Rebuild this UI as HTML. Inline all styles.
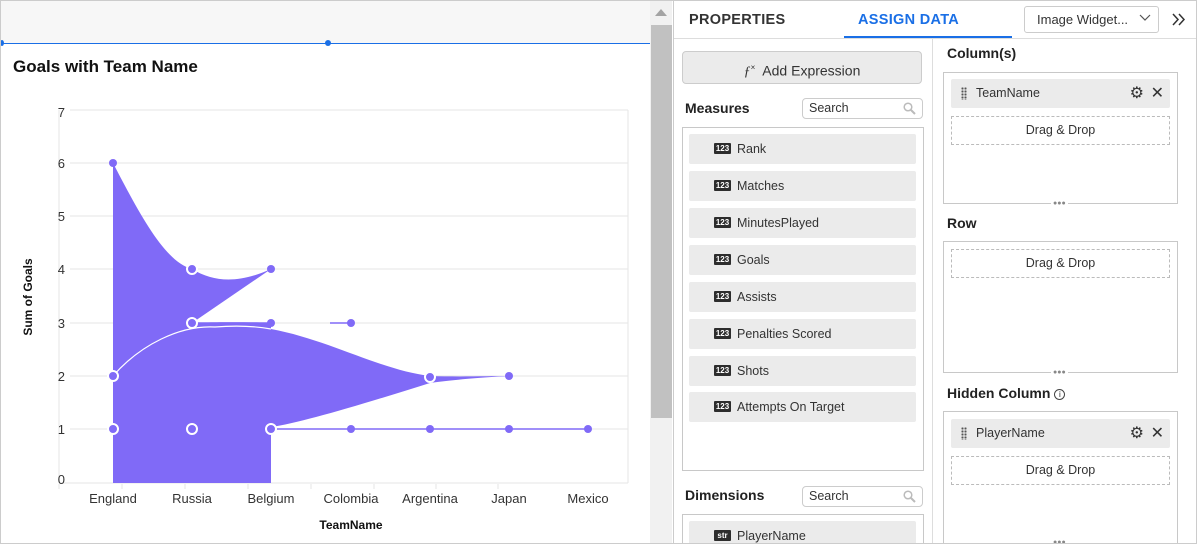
<!DOCTYPE html>
<html style="overflow:hidden"><head><meta charset="utf-8"><style>
*{box-sizing:border-box;margin:0;padding:0}
html,body{width:1197px;height:544px;overflow:hidden}
body{background:#fff;font-family:"Liberation Sans",Arial,sans-serif;color:#333;position:relative}
#w{position:absolute;left:0;top:0;width:1197px;height:544px;overflow:hidden}
.a{position:absolute}
.item{position:absolute;left:689px;width:227px;height:30px;background:#ebebeb;border-radius:2px;font-size:12.5px;color:#333;line-height:30px;padding-left:25px}
.ic{display:inline-block;width:17px;height:11px;background:#2d2d2d;color:#fff;font-size:8px;font-weight:bold;line-height:11px;text-align:center;margin-right:6px;vertical-align:middle;position:relative;top:-1px;border-radius:1px}
.lbl{position:absolute;font-weight:bold;font-size:14px;color:#222}
.search{position:absolute;left:802px;width:121px;height:21px;border:1px solid #ccc;border-radius:4px;font-size:12.5px;padding-left:6px;line-height:19px;color:#333}
.box{position:absolute;left:943px;width:235px;border:1px solid #c8c8c8}
.dd{position:absolute;left:951px;width:219px;height:29px;border:1px dashed #bbb;font-size:12.5px;text-align:center;line-height:27px;color:#333}
.fld{position:absolute;left:951px;width:219px;height:29px;background:#ebebeb;border-radius:2px;font-size:12.5px;line-height:29px;padding-left:25px}
.grip{position:absolute;left:10px;top:8px;width:6px;height:13px;background-image:radial-gradient(circle,#555 1px,transparent 1.2px);background-size:3px 3px}
.dots{position:absolute;font-size:7px;color:#888;letter-spacing:0px;background:#fff;padding:0 2px;line-height:6px}
</style></head><body><div id="w">
<div class="a" style="left:1px;top:1px;width:649px;height:42px;background:#f7f7f7"></div>
<div class="a" style="left:1px;top:43px;width:649px;height:1px;background:#1a6fe6"></div>
<div class="a" style="left:325px;top:40px;width:6px;height:6px;border-radius:50%;background:#1a6fe6"></div>
<div class="a" style="left:0;top:40px;width:4px;height:6px;border-radius:50%;background:#1a6fe6"></div>
<div class="a" style="left:13px;top:57px;font-size:17px;font-weight:bold;color:#111">Goals with Team Name</div>
<svg class="a" style="left:0;top:0" width="650" height="544">
<g stroke="#e6e6e6" stroke-width="1">
<line x1="70" y1="110" x2="628" y2="110"/><line x1="70" y1="163" x2="628" y2="163"/><line x1="70" y1="216" x2="628" y2="216"/><line x1="70" y1="269" x2="628" y2="269"/><line x1="70" y1="323" x2="628" y2="323"/><line x1="70" y1="376" x2="628" y2="376"/><line x1="70" y1="429" x2="628" y2="429"/><line x1="59" y1="483" x2="628" y2="483"/>
<line x1="59" y1="110" x2="59" y2="483"/><line x1="628" y1="110" x2="628" y2="483"/>
<line x1="59" y1="484" x2="59" y2="489"/><line x1="122" y1="484" x2="122" y2="489"/><line x1="185" y1="484" x2="185" y2="489"/><line x1="248" y1="484" x2="248" y2="489"/><line x1="311" y1="484" x2="311" y2="489"/><line x1="374" y1="484" x2="374" y2="489"/><line x1="436" y1="484" x2="436" y2="489"/><line x1="498" y1="484" x2="498" y2="489"/>
</g>
<g font-size="13" fill="#333" text-anchor="end">
<text x="65" y="117">7</text><text x="65" y="168">6</text><text x="65" y="221">5</text><text x="65" y="274">4</text><text x="65" y="328">3</text><text x="65" y="381">2</text><text x="65" y="434">1</text><text x="65" y="484">0</text></g>
<g font-size="13" fill="#333" text-anchor="middle">
<text x="113" y="503">England</text><text x="192" y="503">Russia</text><text x="271" y="503">Belgium</text><text x="351" y="503">Colombia</text><text x="430" y="503">Argentina</text><text x="509" y="503">Japan</text><text x="588" y="503">Mexico</text></g>
<text x="351" y="529" font-size="12" font-weight="bold" text-anchor="middle" fill="#111">TeamName</text>
<text transform="translate(32,297) rotate(-90)" font-size="12" font-weight="bold" text-anchor="middle" fill="#111">Sum of Goals</text>
<path fill="#806af7" d="M113,163 C140,215 165,262 192,269 C215,283 240,283 271,269 L192,323 C205,322 260,322 271,323 L271,329 C330,340 380,370 430,376 C460,377 490,376 509,376 C470,378 445,381 430,383 C360,405 300,423 271,427 L271,483 L113,483 Z"/>
<path fill="none" stroke="#806af7" stroke-width="1.5" d="M271,429 L588,429 M192,323 L271,323 M330,323 L351,323"/>
<path fill="none" stroke="#fff" stroke-width="1.2" d="M113,376 C140,345 180,325 215,327 C240,325 260,327 271,329"/>
<g fill="#806af7">
<circle cx="113" cy="163" r="4"/><circle cx="271" cy="269" r="4"/><circle cx="271" cy="323" r="4"/><circle cx="351" cy="323" r="4"/><circle cx="509" cy="376" r="4"/><circle cx="351" cy="429" r="4"/><circle cx="430" cy="429" r="4"/><circle cx="509" cy="429" r="4"/><circle cx="588" cy="429" r="4"/></g>
<g fill="#806af7" stroke="#fff" stroke-width="2">
<circle cx="192" cy="269" r="5"/><circle cx="192" cy="323" r="5"/><circle cx="113" cy="376" r="5"/><circle cx="430" cy="377" r="5"/><circle cx="113" cy="429" r="5"/><circle cx="192" cy="429" r="5"/><circle cx="271" cy="429" r="5"/></g>
</svg>
<div class="a" style="left:650px;top:1px;width:22px;height:543px;background:#f1f1f1"></div>
<div class="a" style="left:651px;top:25px;width:21px;height:393px;background:#c1c1c1"></div>
<div class="a" style="left:655px;top:9px;width:0;height:0;border-left:6px solid transparent;border-right:6px solid transparent;border-bottom:7px solid #a3a3a3"></div>
<div class="a" style="left:673px;top:1px;width:1px;height:543px;background:#ccc"></div>

<div class="a" style="left:689px;top:12px;font-size:14.5px;font-weight:bold;color:#333;letter-spacing:.3px">PROPERTIES</div>
<div class="a" style="left:858px;top:12px;font-size:14.5px;font-weight:bold;color:#1a6fe6;letter-spacing:.3px">ASSIGN DATA</div>
<div class="a" style="left:844px;top:36px;width:168px;height:3px;background:#1a6fe6"></div>
<div class="a" style="left:674px;top:38px;width:523px;height:1px;background:#ddd"></div>
<div class="a" style="left:1024px;top:6px;width:135px;height:27px;border:1px solid #ccc;border-radius:3px;font-size:13px;line-height:25px;padding-left:12px;color:#333">Image Widget...</div>
<svg class="a" style="left:1139px;top:14px" width="12" height="8"><path d="M1,1 L6,6 L11,1" fill="none" stroke="#555" stroke-width="1.2"/></svg>
<svg class="a" style="left:1171px;top:13px" width="16" height="13"><path d="M2,1 L7,6.5 L2,12 M8,1 L13,6.5 L8,12" fill="none" stroke="#333" stroke-width="1.5"/></svg>
<div class="a" style="left:932px;top:39px;width:1px;height:505px;background:#ddd"></div>

<div class="a" style="left:682px;top:51px;width:240px;height:33px;border:1px solid #ccc;border-radius:4px;background:#ebebeb;font-size:14px;text-align:center;line-height:31px;color:#333"><i style="font-family:'Liberation Serif',serif">ƒ</i><sup style="font-size:8px">×</sup>&nbsp; Add Expression</div>
<div class="lbl" style="left:685px;top:100px">Measures</div>
<div class="search" style="top:98px">Search</div>
<svg class="a" style="left:903px;top:102px" width="13" height="13"><circle cx="5" cy="5" r="3.8" fill="none" stroke="#bbb" stroke-width="1.5"/><path d="M8,8 L12,12" stroke="#bbb" stroke-width="2"/></svg>
<div class="a" style="left:682px;top:127px;width:242px;height:344px;border:1px solid #c8c8c8"></div>
<div class="item" style="top:134px"><span class="ic">123</span>Rank</div>
<div class="item" style="top:171px"><span class="ic">123</span>Matches</div>
<div class="item" style="top:208px"><span class="ic">123</span>MinutesPlayed</div>
<div class="item" style="top:245px"><span class="ic">123</span>Goals</div>
<div class="item" style="top:282px"><span class="ic">123</span>Assists</div>
<div class="item" style="top:319px"><span class="ic">123</span>Penalties Scored</div>
<div class="item" style="top:356px"><span class="ic">123</span>Shots</div>
<div class="item" style="top:392px"><span class="ic">123</span>Attempts On Target</div>
<div class="lbl" style="left:685px;top:487px">Dimensions</div>
<div class="search" style="top:486px">Search</div>
<svg class="a" style="left:903px;top:490px" width="13" height="13"><circle cx="5" cy="5" r="3.8" fill="none" stroke="#bbb" stroke-width="1.5"/><path d="M8,8 L12,12" stroke="#bbb" stroke-width="2"/></svg>
<div class="a" style="left:682px;top:514px;width:242px;height:40px;border:1px solid #c8c8c8"></div>
<div class="item" style="top:521px"><span class="ic">str</span>PlayerName</div>

<div class="lbl" style="left:947px;top:45px">Column(s)</div>
<div class="box" style="top:72px;height:132px"></div>
<div class="dots" style="left:1051px;top:201px">●●●</div>
<div class="fld" style="top:79px"><div class="grip"></div>TeamName<span style="position:absolute;right:26px;top:0;font-size:16px">⚙</span><span style="position:absolute;right:6px;top:0;font-size:16px">✕</span></div>
<div class="dd" style="top:116px">Drag &amp; Drop</div>
<div class="lbl" style="left:947px;top:215px">Row</div>
<div class="box" style="top:241px;height:132px"></div>
<div class="dots" style="left:1051px;top:370px">●●●</div>
<div class="dd" style="top:249px">Drag &amp; Drop</div>
<div class="lbl" style="left:947px;top:385px">Hidden Column <span style="display:inline-block;width:11px;height:11px;border:1px solid #444;border-radius:50%;font-size:8px;line-height:9px;text-align:center;font-weight:normal;vertical-align:1px">i</span></div>
<div class="box" style="top:411px;height:140px"></div>
<div class="dots" style="left:1051px;top:540px">●●●</div>
<div class="fld" style="top:419px"><div class="grip"></div>PlayerName<span style="position:absolute;right:26px;top:0;font-size:16px">⚙</span><span style="position:absolute;right:6px;top:0;font-size:16px">✕</span></div>
<div class="dd" style="top:456px">Drag &amp; Drop</div>
<div class="a" style="left:0;top:0;width:1197px;height:544px;border:1px solid #ccc"></div>
</div></body></html>
